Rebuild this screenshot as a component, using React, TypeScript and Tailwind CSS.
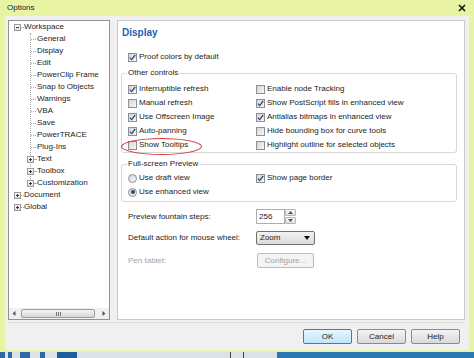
import React from "react";

function Check({ checked }: { checked?: boolean }) {
  return (
    <span className="flex h-[9px] w-[9px] shrink-0 items-center justify-center border border-[#8e8f8f] bg-linear-to-br from-[#d6d6d6] to-[#f7f7f7]">
      {checked && (
        <svg width="7" height="7" viewBox="0 0 7 7">
          <path d="M0.8 3.6 L2.7 5.6 L6.2 1" fill="none" stroke="#2c4a7e" strokeWidth="1.3" />
        </svg>
      )}
    </span>
  );
}

function Radio({ on }: { on?: boolean }) {
  return (
    <span className="flex h-[9px] w-[9px] shrink-0 items-center justify-center rounded-full border border-[#8e8f8f] bg-linear-to-br from-[#d6d6d6] to-[#f7f7f7]">
      {on && <span className="h-[4px] w-[4px] rounded-full bg-[#2f4a66]" />}
    </span>
  );
}

function CRow({ checked, label }: { checked?: boolean; label: string }) {
  return (
    <div className="flex h-[14px] items-center gap-[2px] whitespace-nowrap">
      <Check checked={checked} />
      <span>{label}</span>
    </div>
  );
}

function RRow({ on, label }: { on?: boolean; label: string }) {
  return (
    <div className="flex h-[14px] items-center gap-[2px] whitespace-nowrap">
      <Radio on={on} />
      <span>{label}</span>
    </div>
  );
}

function Exp({ open }: { open?: boolean }) {
  return (
    <span className="relative flex h-[7px] w-[7px] shrink-0 items-center justify-center border border-[#9a9a9a] bg-linear-to-b from-white to-[#dcdcdc]">
      <span className="absolute h-px w-[3px] bg-[#3a3a3a]" />
      {!open && <span className="absolute h-[3px] w-px bg-[#3a3a3a]" />}
    </span>
  );
}

function Child({ label, exp }: { label: string; exp?: boolean }) {
  return (
    <div className="flex h-[12px] items-center whitespace-nowrap">
      {exp ? (
        <>
          <span className="-ml-[4px] flex">
            <Exp />
          </span>
          <span className="w-[2px] border-t border-dotted border-[#a6a6a6]" />
        </>
      ) : (
        <span className="w-[5px] border-t border-dotted border-[#a6a6a6]" />
      )}
      <span className="ml-[1px]">{label}</span>
    </div>
  );
}

function Root({ label, open }: { label: string; open?: boolean }) {
  return (
    <div className="flex h-[12px] items-center whitespace-nowrap">
      <Exp open={open} />
      <span className="w-[3px] border-t border-dotted border-[#a6a6a6]" />
      <span>{label}</span>
    </div>
  );
}

function Btn({ label, def }: { label: string; def?: boolean }) {
  return (
    <div
      className={
        def
          ? "flex h-[15px] w-[49px] items-center justify-center rounded-[2px] border border-[#3c7fb1] bg-linear-to-b from-[#eaf6fd] to-[#bee6fd]"
          : "flex h-[15px] w-[49px] items-center justify-center rounded-[2px] border border-[#8a8a8a] bg-linear-to-b from-[#f4f4f4] to-[#d9d9d9]"
      }
    >
      {label}
    </div>
  );
}

export default function App() {
  const children = [
    "General",
    "Display",
    "Edit",
    "PowerClip Frame",
    "Snap to Objects",
    "Warnings",
    "VBA",
    "Save",
    "PowerTRACE",
    "Plug-Ins",
  ];
  return (
    <div className="flex h-[358px] w-[474px] flex-col bg-[#e8f4a4] font-['Liberation_Sans',Arial,sans-serif] text-[8px] leading-[12px] text-[#1c1c1c]">
      {/* title bar */}
      <div className="flex h-[16px] items-center justify-between pl-[7px] pr-[8px]">
        <span className="text-[8px]">Options</span>
        <svg width="8" height="8" viewBox="0 0 8 8">
          <path d="M1 1 L7 7 M7 1 L1 7" stroke="#111" strokeWidth="1.6" />
        </svg>
      </div>

      {/* dialog body */}
      <div className="mx-[5px] flex h-[334px] flex-col bg-[#f0f0f0] pl-[3px] pr-[4px] pt-[4px]">
        <div className="flex h-[300px] gap-[7px]">
          {/* tree */}
          <div className="flex w-[102px] flex-col border border-[#8e9299] bg-white">
            <div className="flex-1 pl-[5px]">
              <Root label="Workspace" open />
              <div className="ml-[16px] border-l border-dotted border-[#a6a6a6]">
                {children.map((c) => (
                  <Child key={c} label={c} />
                ))}
                <Child label="Text" exp />
                <Child label="Toolbox" exp />
                <Child label="Customization" exp />
              </div>
              <Root label="Document" />
              <Root label="Global" />
            </div>
            <div className="flex h-[11px] items-center bg-[#f0f0f0]">
              <div className="flex w-[10px] items-center justify-center">
                <svg width="4" height="5" viewBox="0 0 4 5">
                  <path d="M3.5 0 L0.5 2.5 L3.5 5 Z" fill="#555" />
                </svg>
              </div>
              <div className="ml-[2px] flex h-[9px] w-[74px] items-center justify-center rounded-[2px] border border-[#9c9c9c] bg-linear-to-b from-[#f6f6f6] to-[#d6d6d6]">
                <svg width="5" height="4" viewBox="0 0 5 4">
                  <path d="M0.5 0 V4 M2.5 0 V4 M4.5 0 V4" stroke="#777" strokeWidth="1" />
                </svg>
              </div>
              <div className="flex-1" />
              <div className="flex w-[10px] items-center justify-center">
                <svg width="4" height="5" viewBox="0 0 4 5">
                  <path d="M0.5 0 L3.5 2.5 L0.5 5 Z" fill="#555" />
                </svg>
              </div>
            </div>
          </div>

          {/* main panel */}
          <div className="relative flex w-[348px] flex-col border border-[#c9c9c9] bg-white">
            <div className="mt-[6px] h-[12px] pl-[4px] text-[10px] font-bold leading-[12px] text-[#1e5fb0]">
              Display
            </div>
            <div className="mt-[12px] flex h-[12px] items-center gap-[2px] pl-[10px]">
              <Check checked />
              <span>Proof colors by default</span>
            </div>

            <fieldset className="ml-[3px] mr-[7px] mt-[4px] rounded-[3px] border border-[#d8d8d8] pl-[6px] pt-[3px]">
              <legend className="-ml-[1px] px-[1px] leading-[12px]">Other controls</legend>
              <div className="grid grid-cols-[128px_1fr]">
                <CRow checked label="Interruptible refresh" />
                <CRow label="Enable node Tracking" />
                <CRow label="Manual refresh" />
                <CRow checked label="Show PostScript fills in enhanced view" />
                <CRow checked label="Use Offscreen Image" />
                <CRow checked label="Antialias bitmaps in enhanced view" />
                <CRow checked label="Auto-panning" />
                <CRow label="Hide bounding box for curve tools" />
                <CRow label="Show Tooltips" />
                <CRow label="Highlight outline for selected objects" />
              </div>
            </fieldset>

            <fieldset className="ml-[3px] mr-[7px] mt-[5px] rounded-[3px] border border-[#d8d8d8] pb-[2px] pl-[6px] pt-[1px]">
              <legend className="-ml-[1px] px-[1px] leading-[12px]">Full-screen Preview</legend>
              <div className="grid grid-cols-[128px_1fr]">
                <RRow label="Use draft view" />
                <CRow checked label="Show page border" />
                <RRow on label="Use enhanced view" />
              </div>
            </fieldset>

            <div className="mt-[7px] flex h-[15px] items-center pl-[10px]">
              <span className="w-[128px]">Preview fountain steps:</span>
              <div className="flex h-[15px] w-[29px] items-center border border-[#abadb3] pl-[2px]">256</div>
              <div className="flex h-[15px] w-[11px] flex-col gap-px">
                <div className="flex flex-1 items-center justify-center rounded-[1px] border border-[#b5b5b5] bg-linear-to-b from-[#f7f7f7] to-[#e3e3e3]">
                  <svg width="5" height="3" viewBox="0 0 5 3">
                    <path d="M0 3 L2.5 0 L5 3 Z" fill="#555" />
                  </svg>
                </div>
                <div className="flex flex-1 items-center justify-center rounded-[1px] border border-[#b5b5b5] bg-linear-to-b from-[#f7f7f7] to-[#e3e3e3]">
                  <svg width="5" height="3" viewBox="0 0 5 3">
                    <path d="M0 0 L2.5 3 L5 0 Z" fill="#555" />
                  </svg>
                </div>
              </div>
            </div>

            <div className="mt-[7px] flex h-[14px] items-center pl-[10px]">
              <span className="w-[128px]">Default action for mouse wheel:</span>
              <div className="flex h-[14px] w-[59px] items-center justify-between rounded-[2px] border border-[#707070] bg-linear-to-b from-[#f3f3f3] to-[#dbdbdb] pl-[3px] pr-[4px]">
                <span>Zoom</span>
                <svg width="6" height="4" viewBox="0 0 6 4">
                  <path d="M0 0 L3 4 L6 0 Z" fill="#111" />
                </svg>
              </div>
            </div>

            <div className="mt-[8px] flex h-[15px] items-center pl-[10px] text-[#a3a3a3]">
              <span className="w-[129px]">Pen tablet:</span>
              <div className="flex h-[15px] w-[57px] items-center justify-center rounded-[2px] border border-[#b8bcbf] bg-[#f4f4f4]">
                Configure...
              </div>
            </div>

            {/* annotation ellipse */}
            <div className="absolute left-[3px] top-[117px] h-[17px] w-[81px] rounded-[50%] border-[1.5px] border-[#d2393a]" />
          </div>
        </div>

        <div className="mt-[2px] h-px bg-[#dcdcdc]" />

        <div className="mt-[6px] flex justify-end gap-[5px] pr-[5px]">
          <Btn label="OK" def />
          <Btn label="Cancel" />
          <Btn label="Help" />
        </div>
      </div>

      <div className="h-[2px]" />
      {/* taskbar strip */}
      <div className="flex h-[6px] bg-[#dde2e6]">
        <div className="w-[5px] bg-[#2f6aa6]" />
        <div className="w-[3px]" />
        <div className="w-[4px] bg-[#2f6aa6]" />
        <div className="w-[8px]" />
        <div className="w-[10px] bg-[#2f6aa6]" />
        <div className="w-[10px]" />
        <div className="w-[5px] bg-[#2f6aa6]" />
        <div className="w-[12px]" />
        <div className="w-[20px] bg-[#1f5f9e]" />
        <div className="w-[153px]" />
        <div className="w-[1px] bg-[#444]" />
        <div className="w-[12px]" />
        <div className="w-[1px] bg-[#444]" />
        <div className="w-[33px]" />
        <div className="flex-1 bg-[#2a78b2]" />
      </div>
    </div>
  );
}
